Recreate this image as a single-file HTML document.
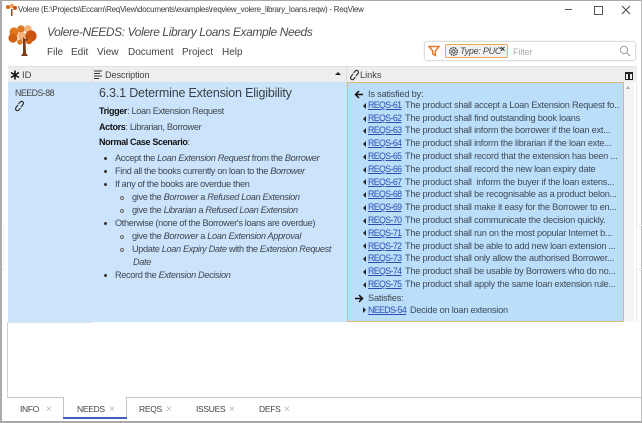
<!DOCTYPE html>
<html><head><meta charset="utf-8"><style>
html,body{margin:0;padding:0;background:#fff}
#w{position:relative;width:642px;height:423px;overflow:hidden;background:#fff;font-family:"Liberation Sans",sans-serif;color:#444;font-size:10px}
.a{position:absolute;white-space:nowrap}
.l{position:absolute;white-space:nowrap;line-height:13px;height:13px;font-size:9.2px;letter-spacing:-.35px;color:#3d4650}
.k{color:#111;font-weight:bold;font-size:9px}
.r{position:absolute;white-space:nowrap;left:368px;width:252px;overflow:hidden;line-height:13px;height:13px;font-size:9.2px;letter-spacing:-.22px;color:#3f4a55}
.r a{display:inline-block;width:37px;font-size:8.8px;letter-spacing:-.6px;color:#2a4fb0;text-decoration:underline}
.tri{position:absolute;left:363px;width:0;height:0;border:3px solid transparent;border-left:0;border-right:3px solid #222}
.tab{position:absolute;top:403px;font-size:8.5px;letter-spacing:-.3px;color:#444;line-height:13px;white-space:nowrap}
.x{position:absolute;top:403px;font-size:10px;line-height:13px;color:#b4b4b4}
.dot{position:absolute;width:3px;height:3px;border-radius:50%;background:#333}
.cir{position:absolute;width:4px;height:4px;border-radius:50%;border:1px solid #666;box-sizing:border-box}
.m{position:absolute;top:46px;font-size:10px;line-height:13px;color:#444}
</style></head><body><div id="w">
<div class="a" style="left:0;top:0;width:642px;height:1px;background:#a8a8a8"></div>
<div class="a" style="left:0;top:0;width:2px;height:423px;background:#ababab"></div>
<div class="a" style="left:641px;top:0;width:1px;height:423px;background:#bbb"></div>
<div class="a" style="left:0;top:421px;width:642px;height:2px;background:#a8a8a8"></div>

<svg class="a" style="left:5px;top:3px" width="13" height="13" viewBox="0 0 13 13"><circle cx="3" cy="4" r="2" fill="#d9691c"/><circle cx="7" cy="3" r="2.2" fill="#eda05a"/><circle cx="10" cy="5" r="2" fill="#c9540f"/><rect x="6" y="6" width="1.5" height="7" fill="#7a4a25"/></svg>
<div class="a" style="left:18px;top:4px;font-size:8px;letter-spacing:-.27px;line-height:12px;color:#3a3a3a">Volere (E:\Projects\Eccam\ReqView\documents\examples\reqview_volere_library_loans.reqw) - ReqView</div>
<div class="a" style="left:565px;top:9px;width:7px;height:1px;background:#555"></div>
<div class="a" style="left:594px;top:6px;width:7px;height:7px;border:1px solid #555"></div>
<svg class="a" style="left:621px;top:5px" width="10" height="10"><path d="M1 1L9 9M9 1L1 9" stroke="#444" stroke-width="1"/></svg>

<svg class="a" style="left:8px;top:24px" width="30" height="32" viewBox="0 0 30 32"><circle cx="6" cy="8" r="4.6" fill="#e07a22"/><circle cx="5" cy="14" r="4.6" fill="#d2600f"/><circle cx="13" cy="5" r="3.8" fill="#e07a22"/><circle cx="20" cy="5" r="3.8" fill="#f2b27a"/><circle cx="14" cy="12" r="4" fill="#f2b27a"/><circle cx="23" cy="12" r="5.6" fill="#c9540f"/><circle cx="21" cy="17" r="3.2" fill="#d2600f"/><circle cx="12" cy="18" r="2.8" fill="#e07a22"/><path d="M15 13L15 29L13 32L20 32L18 29L17.500 17L21 14L17 15Z" fill="#7a3a18"/></svg>
<div class="a" style="left:47px;top:24px;font-size:12px;line-height:17px;font-style:italic;color:#4c4c4c;letter-spacing:-.4px">Volere-NEEDS: Volere Library Loans Example Needs</div>
<div class="m" style="left:47px">File</div>
<div class="m" style="left:71px">Edit</div>
<div class="m" style="left:97px">View</div>
<div class="m" style="left:128px">Document</div>
<div class="m" style="left:182px">Project</div>
<div class="m" style="left:222px">Help</div>

<div class="a" style="left:424px;top:41px;width:210px;height:18px;border:1px solid #ddd;border-radius:3px;box-shadow:0 0 2px #e4e4e4"></div>
<svg class="a" style="left:428px;top:45px" width="12" height="12"><path d="M1 1.500H11L7.300 6V10.500L4.700 9V6Z" fill="none" stroke="#e8792b" stroke-width="1.500"/></svg>
<div class="a" style="left:445px;top:44px;width:61px;height:12px;border:1px solid #eca65f;border-radius:2px;background:#f2f2f2"></div>
<svg class="a" style="left:448px;top:46px" width="11" height="11" viewBox="0 0 11 11"><circle cx="5.500" cy="5.500" r="3.800" fill="none" stroke="#444" stroke-width="1.400" stroke-dasharray="1.600 .8"/><circle cx="5.500" cy="5.500" r="1.700" fill="none" stroke="#444"/></svg>
<div class="a" style="left:460px;top:45px;font-size:9px;line-height:13px;font-style:italic;letter-spacing:-.25px;color:#444">Type: PUC</div>
<div class="a" style="left:500px;top:44px;font-size:9px;line-height:10px;font-weight:bold;color:#333">×</div>
<div class="a" style="left:513px;top:46px;font-size:8.8px;line-height:13px;color:#aaa">Filter</div>
<svg class="a" style="left:619px;top:45px" width="12" height="12"><circle cx="5" cy="5" r="3.600" fill="none" stroke="#999"/><path d="M8 8L11 11" stroke="#999" stroke-width="1.200"/></svg>

<div class="a" style="left:8px;top:67px;width:629px;height:15px;background:#eeeeee"></div>
<div class="a" style="left:8px;top:66px;width:629px;height:1px;background:#e2e2e2"></div>
<div class="a" style="left:92px;top:67px;width:1px;height:15px;background:#ddd"></div>
<div class="a" style="left:346px;top:67px;width:1px;height:15px;background:#ddd"></div>
<svg class="a" style="left:10px;top:70px" width="10" height="10"><path d="M5 0.500V9.500M1 2.500L9 7.500M9 2.500L1 7.500" stroke="#111" stroke-width="1.600"/></svg>
<div class="a" style="left:22px;top:69px;font-size:9.5px;line-height:13px;color:#444">ID</div>
<svg class="a" style="left:94px;top:70px" width="9" height="10"><path d="M0 1H8M0 3.500H6M0 6H8M0 8.500H5" stroke="#333" stroke-width="1"/></svg>
<div class="a" style="left:105px;top:69px;font-size:9.2px;letter-spacing:-.15px;line-height:13px;color:#444">Description</div>
<div class="a" style="left:335px;top:72px;width:0;height:0;border:3px solid transparent;border-top:0;border-bottom:3px solid #222"></div>
<svg class="a" style="left:349px;top:69px" width="11" height="12" viewBox="0 0 11 12"><path d="M4 5L2 7.500A1.800 1.800 0 0 0 4.800 10L6.500 8M7 7L9 4.500A1.800 1.800 0 0 0 6.200 2L4.500 4" fill="none" stroke="#333" stroke-width="1.200"/></svg>
<div class="a" style="left:360px;top:69px;font-size:9.2px;line-height:13px;color:#444">Links</div>
<div class="a" style="left:625px;top:72px;width:6px;height:5px;border:1.500px solid #222;border-top-width:2px"></div>
<div class="a" style="left:628px;top:72px;width:1.500px;height:8px;background:#222"></div>

<div class="a" style="left:8px;top:82px;width:616px;height:240px;background:#cce4fb"></div>
<div class="a" style="left:624px;top:82px;width:10px;height:240px;background:#f5f5f5"></div>
<div class="a" style="left:636px;top:82px;width:1px;height:240px;background:#e6e6e6"></div>
<div class="a" style="left:92px;top:82px;width:1px;height:240px;background:#d9e6f2"></div>
<div class="a" style="left:8px;top:322px;width:85px;height:1px;background:#e4e4e4"></div>
<div class="a" style="left:347px;top:82px;width:277px;height:240px;background:#bbdefb;border:1px solid #dcb87c;box-sizing:border-box"></div>
<div class="a" style="left:626px;top:86px;width:0;height:0;border:2.500px solid transparent;border-top:0;border-bottom:3px solid #aaa"></div>

<div class="a" style="left:15px;top:87px;font-size:8.8px;letter-spacing:-.5px;line-height:13px;color:#444">NEEDS-88</div>
<svg class="a" style="left:14px;top:100px" width="11" height="12" viewBox="0 0 11 12"><path d="M4 5L2 7.500A1.800 1.800 0 0 0 4.800 10L6.500 8M7 7L9 4.500A1.800 1.800 0 0 0 6.200 2L4.500 4" fill="none" stroke="#333" stroke-width="1.200"/></svg>

<div class="a" style="left:99px;top:85px;font-size:12.5px;line-height:16px;color:#3a3f45;letter-spacing:-.18px">6.3.1 Determine Extension Eligibility</div>
<div class="l" style="left:99px;top:105px"><span class="k">Trigger</span>: Loan Extension Request</div>
<div class="l" style="left:99px;top:121px"><span class="k">Actors</span>: Librarian, Borrower</div>
<div class="l" style="left:99px;top:136px"><span class="k">Normal Case Scenario</span>:</div>

<div class="dot" style="left:104px;top:157px"></div>
<div class="l" style="left:115px;top:152px">Accept the <i>Loan Extension Request</i> from the <i>Borrower</i></div>
<div class="dot" style="left:104px;top:170px"></div>
<div class="l" style="left:115px;top:165px">Find all the books currently on loan to the <i>Borrower</i></div>
<div class="dot" style="left:104px;top:183px"></div>
<div class="l" style="left:115px;top:178px">If any of the books are overdue then</div>
<div class="cir" style="left:120px;top:196px"></div>
<div class="l" style="left:132px;top:191px">give the <i>Borrower</i> a <i>Refused Loan Extension</i></div>
<div class="cir" style="left:120px;top:209px"></div>
<div class="l" style="left:132px;top:204px">give the <i>Librarian</i> a <i>Refused Loan Extension</i></div>
<div class="dot" style="left:104px;top:222px"></div>
<div class="l" style="left:115px;top:217px">Otherwise (none of the Borrower's loans are overdue)</div>
<div class="cir" style="left:120px;top:235px"></div>
<div class="l" style="left:132px;top:230px">give the <i>Borrower</i> a <i>Loan Extension Approval</i></div>
<div class="cir" style="left:120px;top:248px"></div>
<div class="l" style="left:132px;top:243px">Update <i>Loan Expiry Date</i> with the <i>Extension Request</i></div>
<div class="l" style="left:133px;top:256px"><i>Date</i></div>
<div class="dot" style="left:104px;top:274px"></div>
<div class="l" style="left:115px;top:269px">Record the <i>Extension Decision</i></div>

<svg class="a" style="left:354px;top:90px" width="10" height="9"><path d="M9 4.500H2M5 1L1.500 4.500L5 8" fill="none" stroke="#111" stroke-width="1.500"/></svg>
<div class="l" style="left:368px;top:88px;letter-spacing:-.18px">Is satisfied by:</div>
<div class="tri" style="top:103px"></div><div class="r" style="top:99px"><a>REQS-61</a>The product shall accept a Loan Extension Request fo...</div>
<div class="tri" style="top:116px"></div><div class="r" style="top:112px"><a>REQS-62</a>The product shall find outstanding book loans</div>
<div class="tri" style="top:128px"></div><div class="r" style="top:124px"><a>REQS-63</a>The product shall inform the borrower if the loan ext...</div>
<div class="tri" style="top:141px"></div><div class="r" style="top:137px"><a>REQS-64</a>The product shall inform the librarian if the loan exte...</div>
<div class="tri" style="top:154px"></div><div class="r" style="top:150px"><a>REQS-65</a>The product shall record that the extension has been ...</div>
<div class="tri" style="top:167px"></div><div class="r" style="top:163px"><a>REQS-66</a>The product shall record the new loan expiry date</div>
<div class="tri" style="top:179px"></div><div class="r" style="top:176px"><a>REQS-67</a>The product shall &nbsp;inform the buyer if the loan extens...</div>
<div class="tri" style="top:192px"></div><div class="r" style="top:188px"><a>REQS-68</a>The product shall be recognisable as a product belon...</div>
<div class="tri" style="top:205px"></div><div class="r" style="top:201px"><a>REQS-69</a>The product shall make it easy for the Borrower to en...</div>
<div class="tri" style="top:218px"></div><div class="r" style="top:214px"><a>REQS-70</a>The product shall communicate the decision quickly.</div>
<div class="tri" style="top:230px"></div><div class="r" style="top:227px"><a>REQS-71</a>The product shall run on the most popular Internet b...</div>
<div class="tri" style="top:243px"></div><div class="r" style="top:240px"><a>REQS-72</a>The product shall be able to add new loan extension ...</div>
<div class="tri" style="top:256px"></div><div class="r" style="top:252px"><a>REQS-73</a>The product shall only allow the authorised Borrower...</div>
<div class="tri" style="top:269px"></div><div class="r" style="top:265px"><a>REQS-74</a>The product shall be usable by Borrowers who do no...</div>
<div class="tri" style="top:282px"></div><div class="r" style="top:278px"><a>REQS-75</a>The product shall apply the same loan extension rule...</div>
<svg class="a" style="left:354px;top:294px" width="10" height="9"><path d="M1 4.500H8M5 1L8.500 4.500L5 8" fill="none" stroke="#111" stroke-width="1.500"/></svg>
<div class="l" style="left:368px;top:292px;letter-spacing:-.18px">Satisfies:</div>
<div class="a" style="left:363px;top:307px;width:0;height:0;border:3px solid transparent;border-right:0;border-left:3px solid #222"></div>
<div class="r" style="top:304px"><a style="width:42px">NEEDS-54</a>Decide on loan extension</div>

<div class="a" style="left:7px;top:322px;width:1px;height:75px;background:#d0d0d0"></div>
<div class="a" style="left:3px;top:225px;width:4px;height:45px;border:1px solid #eee;border-right:0;box-sizing:border-box"></div>
<div class="a" style="left:636px;top:225px;width:6px;height:45px;border:1px solid #eee;border-right:0;box-sizing:border-box"></div>
<div class="a" style="left:7px;top:397px;width:56px;height:1px;background:#c4c4c4"></div>
<div class="a" style="left:126px;top:397px;width:516px;height:1px;background:#c4c4c4"></div>
<div class="a" style="left:63px;top:397px;width:1px;height:20px;background:#c4c4c4"></div>
<div class="a" style="left:126px;top:397px;width:1px;height:20px;background:#c4c4c4"></div>
<div class="a" style="left:63px;top:417px;width:64px;height:2px;background:#3f5fbf"></div>
<div class="tab" style="left:20px">INFO</div><div class="x" style="left:46px">×</div>
<div class="tab" style="left:77px">NEEDS</div><div class="x" style="left:109px">×</div>
<div class="tab" style="left:139px">REQS</div><div class="x" style="left:166px">×</div>
<div class="tab" style="left:196px">ISSUES</div><div class="x" style="left:229px">×</div>
<div class="tab" style="left:259px">DEFS</div><div class="x" style="left:284px">×</div>
</div></body></html>
